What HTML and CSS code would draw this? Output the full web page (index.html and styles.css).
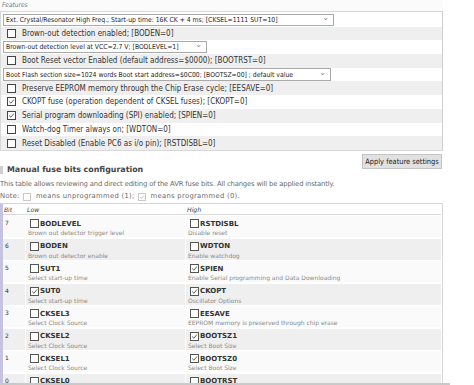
FILE: index.html
```html
<!DOCTYPE html>
<html>
<head>
<meta charset="utf-8">
<link rel="stylesheet" href="styles.css">
</head>
<body>
<div class="page">
  <div class="legend">Features</div>
  <div class="fbox">
    <div class="frow"><span class="sel sel1">Ext. Crystal/Resonator High Freq.; Start-up time: 16K CK + 4 ms; [CKSEL=1111 SUT=10]<span class="arr">&#8964;</span></span></div>
    <div class="frow"><span class="cb"></span><span>Brown-out detection enabled; [BODEN=0]</span></div>
    <div class="frow"><span class="sel sel2">Brown-out detection level at VCC=2.7 V; [BODLEVEL=1]<span class="arr">&#8964;</span></span></div>
    <div class="frow"><span class="cb"></span><span>Boot Reset vector Enabled (default address=$0000); [BOOTRST=0]</span></div>
    <div class="frow"><span class="sel sel3">Boot Flash section size=1024 words Boot start address=$0C00; [BOOTSZ=00] ; default value<span class="arr">&#8964;</span></span></div>
    <div class="frow"><span class="cb"></span><span>Preserve EEPROM memory through the Chip Erase cycle; [EESAVE=0]</span></div>
    <div class="frow"><span class="cb"><svg viewBox="0 0 9 9"><path d="M1.5 4.5 L3.7 6.7 L7.6 2" /></svg></span><span>CKOPT fuse (operation dependent of CKSEL fuses); [CKOPT=0]</span></div>
    <div class="frow"><span class="cb"><svg viewBox="0 0 9 9"><path d="M1.5 4.5 L3.7 6.7 L7.6 2" /></svg></span><span>Serial program downloading (SPI) enabled; [SPIEN=0]</span></div>
    <div class="frow"><span class="cb"></span><span>Watch-dog Timer always on; [WDTON=0]</span></div>
    <div class="frow"><span class="cb"></span><span>Reset Disabled (Enable PC6 as i/o pin); [RSTDISBL=0]</span></div>
  </div>
  <div class="btnrow"><button class="btn">Apply feature settings</button></div>
  <h2 class="heading">Manual fuse bits configuration</h2>
  <p class="desc">This table allows reviewing and direct editing of the AVR fuse bits. All changes will be applied instantly.</p>
  <p class="desc note">Note: <span class="ncb"></span> means unprogrammed (1); <span class="ncb"><svg viewBox="0 0 9 9"><path d="M1.5 4.5 L3.7 6.7 L7.6 2" /></svg></span> means programmed (0).</p>
  <div class="fuses">
    <div class="frw head"><div class="c bit">Bit</div><div class="c">Low</div><div class="c">High</div></div>
    <div class="frw"><div class="c bit">7</div><div class="c"><div class="fn"><span class="tcb"></span>BODLEVEL</div><div class="fd">Brown out detector trigger level</div></div><div class="c"><div class="fn"><span class="tcb"></span>RSTDISBL</div><div class="fd">Disable reset</div></div></div>
    <div class="frw alt"><div class="c bit">6</div><div class="c"><div class="fn"><span class="tcb"></span>BODEN</div><div class="fd">Brown out detector enable</div></div><div class="c"><div class="fn"><span class="tcb"></span>WDTON</div><div class="fd">Enable watchdog</div></div></div>
    <div class="frw"><div class="c bit">5</div><div class="c"><div class="fn"><span class="tcb"></span>SUT1</div><div class="fd">Select start-up time</div></div><div class="c"><div class="fn"><span class="tcb"><svg viewBox="0 0 9 9"><path d="M1.5 4.5 L3.7 6.7 L7.6 2" /></svg></span>SPIEN</div><div class="fd">Enable Serial programming and Data Downloading</div></div></div>
    <div class="frw alt"><div class="c bit">4</div><div class="c"><div class="fn"><span class="tcb"><svg viewBox="0 0 9 9"><path d="M1.5 4.5 L3.7 6.7 L7.6 2" /></svg></span>SUT0</div><div class="fd">Select start-up time</div></div><div class="c"><div class="fn"><span class="tcb"><svg viewBox="0 0 9 9"><path d="M1.5 4.5 L3.7 6.7 L7.6 2" /></svg></span>CKOPT</div><div class="fd">Oscillator Options</div></div></div>
    <div class="frw"><div class="c bit">3</div><div class="c"><div class="fn"><span class="tcb"></span>CKSEL3</div><div class="fd">Select Clock Source</div></div><div class="c"><div class="fn"><span class="tcb"></span>EESAVE</div><div class="fd">EEPROM memory is preserved through chip erase</div></div></div>
    <div class="frw alt"><div class="c bit">2</div><div class="c"><div class="fn"><span class="tcb"></span>CKSEL2</div><div class="fd">Select Clock Source</div></div><div class="c"><div class="fn"><span class="tcb"><svg viewBox="0 0 9 9"><path d="M1.5 4.5 L3.7 6.7 L7.6 2" /></svg></span>BOOTSZ1</div><div class="fd">Select Boot Size</div></div></div>
    <div class="frw"><div class="c bit">1</div><div class="c"><div class="fn"><span class="tcb"></span>CKSEL1</div><div class="fd">Select Clock Source</div></div><div class="c"><div class="fn"><span class="tcb"><svg viewBox="0 0 9 9"><path d="M1.5 4.5 L3.7 6.7 L7.6 2" /></svg></span>BOOTSZ0</div><div class="fd">Select Boot Size</div></div></div>
    <div class="frw alt"><div class="c bit">0</div><div class="c"><div class="fn"><span class="tcb"></span>CKSEL0</div></div><div class="c"><div class="fn"><span class="tcb"></span>BOOTRST</div></div></div>
  </div>
</div>
<div class="bottombar"></div>
</body>
</html>
```
FILE: styles.css
```css
html, body {
  margin: 0;
  padding: 0;
  background: #ffffff;
  overflow: hidden;
}
body {
  width: 474px;
  height: 385px;
  position: relative;
  font-family: "DejaVu Sans", Verdana, sans-serif;
  color: #333333;
}
.page {
  width: 443px;
  height: 385px;
  overflow: hidden;
}
.legend {
  font-family: "DejaVu Sans Condensed", "DejaVu Sans", sans-serif;
  font-style: italic;
  font-size: 6.5px;
  color: #777777;
  height: 11px;
  line-height: 11px;
  padding-left: 2px;
  background: #fbfbfb;
}
.fbox {
  border: 1px solid #d8d8d8;
  border-right-color: #cfcfcf;
  padding-top: 1px;
  font-family: "DejaVu Sans Condensed", "DejaVu Sans", sans-serif;
  font-size: 8px;
  color: #333333;
}
.frow {
  height: 13.7px;
  display: flex;
  align-items: center;
  padding-left: 2px;
  white-space: nowrap;
}
.frow:nth-child(even) {
  background: #efefef;
}
.sel {
  display: inline-flex;
  align-items: center;
  justify-content: space-between;
  box-sizing: border-box;
  height: 12.5px;
  border: 1px solid #a9a9a9;
  background: #ffffff;
  padding: 0 4px 0 2px;
  font-size: 6.8px;
  color: #222222;
}
.sel1 { width: 331px; }
.sel2 { width: 204px; }
.sel3 { width: 328px; }
.arr {
  color: #888888;
  font-size: 8px;
  line-height: 8px;
  margin-top: -4px;
  font-family: "DejaVu Sans", sans-serif;
}
.cb {
  display: inline-block;
  box-sizing: border-box;
  width: 9px;
  height: 9px;
  flex: none;
  border: 1px solid #444444;
  background: #ffffff;
  margin: 0 6px 0 4px;
}
.cb svg, .ncb svg, .tcb svg {
  display: block;
  width: 100%;
  height: 100%;
}
.cb svg path, .ncb svg path, .tcb svg path {
  fill: none;
  stroke: #444444;
  stroke-width: 1.1;
}
.btnrow {
  display: flex;
  justify-content: flex-end;
  padding-top: 3px;
}
.btn {
  font-family: "DejaVu Sans Condensed", "DejaVu Sans", sans-serif;
  font-size: 7.4px;
  color: #222222;
  background: #e1e1e1;
  border: 1px solid #c4c4c4;
  height: 15px;
  width: 80px;
  padding: 0;
  margin-right: 1px;
}
.heading {
  margin: 0;
  height: 11px;
  line-height: 11px;
  margin-top: -5px;
  font-size: 7.9px;
  font-weight: bold;
  color: #444444;
  padding-left: 7px;
  position: relative;
}
.heading::before {
  content: "";
  position: absolute;
  left: 0;
  top: 2px;
  width: 3px;
  height: 8px;
  background: #cfcfcf;
}
.desc {
  margin: 0;
  font-size: 6.8px;
  color: #6a6a6a;
  line-height: 7px;
  margin-top: 6px;
  white-space: nowrap;
  letter-spacing: -0.15px;
}
.note {
  margin-top: 5px;
  display: flex;
  align-items: center;
  letter-spacing: 0.3px;
}
.ncb {
  display: inline-block;
  box-sizing: border-box;
  width: 8px;
  height: 8px;
  border: 1px solid #c8c8c8;
  margin: 0 5px 0 3px;
}
.ncb svg path { stroke: #b0b0b0; }
.fuses {
  margin-top: 2px;
  width: 443px;
  box-sizing: border-box;
  border: 1px solid #d5d5d5;
  border-left: 3px solid #c6c3de;
  padding: 1px 1px 0 0;
}
.frw {
  display: grid;
  grid-template-columns: 22px 159px 1fr;
  column-gap: 1px;
  height: 21px;
  margin-bottom: 1.5px;
}
.frw .c {
  background: #fafafa;
  padding-left: 2px;
  overflow: hidden;
  white-space: nowrap;
}
.frw.alt .c {
  background: #efefef;
}
.frw.head {
  height: 9px;
  border-bottom: 1px solid #dcdcdc;
  margin-bottom: 1.5px;
}
.frw.head .c {
  background: #ffffff;
  font-style: italic;
  font-size: 6.2px;
  line-height: 9px;
  color: #444444;
  padding-left: 1px;
}
.frw .c.bit {
  font-size: 6px;
  line-height: 13px;
  padding-left: 2px;
}
.frw.head .c.bit {
  line-height: 9px;
  padding-left: 1px;
}
.fn {
  display: flex;
  align-items: center;
  font-weight: bold;
  font-size: 7px;
  color: #333333;
  height: 11px;
  margin-top: 2px;
}
.tcb {
  display: inline-block;
  box-sizing: border-box;
  width: 9px;
  height: 9px;
  flex: none;
  border: 1px solid #555555;
  background: #ffffff;
  margin: 0 1px 0 2px;
}
.fd {
  font-size: 6px;
  color: #8a8a8a;
  line-height: 7px;
}
.bottombar {
  position: absolute;
  left: 0;
  bottom: 0;
  width: 450px;
  height: 2px;
  background: #c9c9c9;
}
```
